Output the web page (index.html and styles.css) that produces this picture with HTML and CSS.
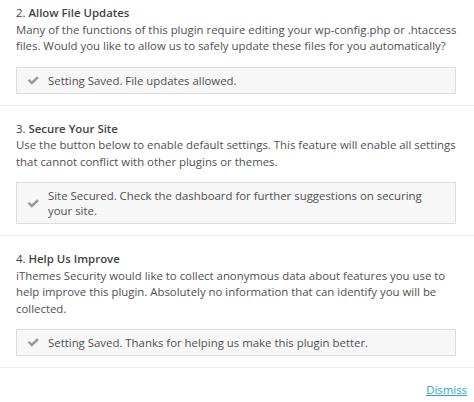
FILE: index.html
```html
<!DOCTYPE html>
<html>
<head>
<meta charset="utf-8">
<link rel="stylesheet" href="styles.css">
</head>
<body>
<div class="panel">
  <section class="step first">
    <h3 class="title">2. <strong>Allow File Updates</strong></h3>
    <p class="desc">Many of the functions of this plugin require editing your wp-config.php or .htaccess files. Would you like to allow us to safely update these files for you automatically?</p>
    <div class="notice"><svg class="check" viewBox="0 0 12 9"><path d="M0.6 4.6l1.8-1.7 2.4 2.3 5.3-5 1.8 1.7-7.1 6.8z"/></svg><span>Setting Saved. File updates allowed.</span></div>
  </section>
  <section class="step">
    <h3 class="title">3. <strong>Secure Your Site</strong></h3>
    <p class="desc">Use the button below to enable default settings. This feature will enable all settings that cannot conflict with other plugins or themes.</p>
    <div class="notice"><svg class="check" viewBox="0 0 12 9"><path d="M0.6 4.6l1.8-1.7 2.4 2.3 5.3-5 1.8 1.7-7.1 6.8z"/></svg><span>Site Secured. Check the dashboard for further suggestions on securing your site.</span></div>
  </section>
  <section class="step">
    <h3 class="title">4. <strong>Help Us Improve</strong></h3>
    <p class="desc">iThemes Security would like to collect anonymous data about features you use to help improve this plugin. Absolutely no information that can identify you will be collected.</p>
    <div class="notice"><svg class="check" viewBox="0 0 12 9"><path d="M0.6 4.6l1.8-1.7 2.4 2.3 5.3-5 1.8 1.7-7.1 6.8z"/></svg><span>Setting Saved. Thanks for helping us make this plugin better.</span></div>
  </section>
  <div class="footer"><a href="#" class="dismiss">Dismiss</a></div>
</div>
</body>
</html>
```
FILE: styles.css
```css
html, body {
  margin: 0;
  padding: 0;
  background: #fff;
}
body {
  font-family: "Open Sans", "Liberation Sans", sans-serif;
  font-size: 11.4px;
  color: #505050;
}
.panel {
  width: 474px;
}
.step {
  padding: 15px 12px 11px 16px;
  border-bottom: 1px solid #eee;
}
.step.first {
  padding-top: 5px;
}
.title {
  margin: 0;
  font-size: 11.4px;
  font-weight: 400;
  line-height: 16.5px;
  color: #444;
}
.title strong {
  font-weight: 600;
}
.desc {
  margin: 0 0 12px 0;
  line-height: 16.5px;
}
.notice {
  display: flex;
  align-items: center;
  margin-right: 6px;
  background: #f7f7f7;
  border: 1px solid #ddd;
  padding: 5px 14px 5px 10px;
  line-height: 15px;
}
.check {
  width: 12px;
  height: 9px;
  fill: #999;
  flex: none;
  margin-right: 9px;
}
.footer {
  display: flex;
  justify-content: flex-end;
  padding: 14px 7px 0 0;
}
.dismiss {
  color: #2ea2cc;
  text-decoration: underline;
  font-size: 11.4px;
}
```
